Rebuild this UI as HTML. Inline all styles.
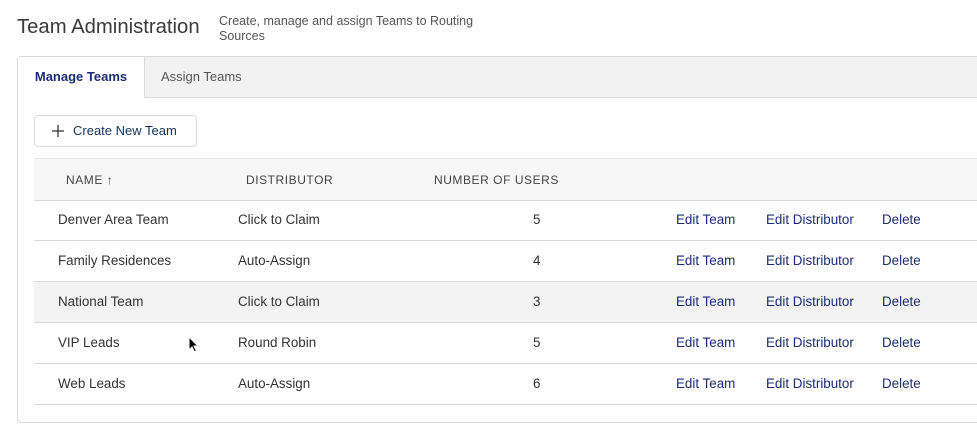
<!DOCTYPE html>
<html><head><style>
body{margin:0;width:977px;height:439px;background:#fff;font-family:"Liberation Sans",sans-serif;overflow:hidden;position:relative;color:#16325c}
.abs{position:absolute;white-space:nowrap}
.title{left:17px;top:16px;font-size:20.3px;color:#3a3a3a;font-weight:300}
.sub{left:219px;top:14px;font-size:12.5px;color:#555;line-height:15px}
.box{position:absolute;left:17px;top:56px;width:980px;height:365px;border:1px solid #dddbda;border-radius:4px;background:#fff}
.tabs{position:absolute;left:0;top:0;right:0;height:40px;background:#f3f2f2;border-bottom:1px solid #dddbda;border-radius:4px 0 0 0}
.tab{position:absolute;top:0;height:41px;line-height:40px;font-size:13px}
.btn{left:34px;top:115px;width:161px;height:30px;border:1px solid #dddbda;border-radius:4px;font-size:13px;line-height:30px;color:#16325c;background:#fff}
.thead{position:absolute;left:34px;top:158px;width:943px;height:41px;background:#f7f7f7;border-top:1px solid #e5e5e5;border-bottom:1px solid #dddbda}
.th{font-size:12px;letter-spacing:.55px;color:#444;top:173px}
.row{position:absolute;left:34px;width:943px;height:40px;border-bottom:1px solid #dddbda}
.td{font-size:13.4px;color:#333}
.lk{font-size:13.4px;color:#1b2d72}
</style></head><body>
<div class="abs title">Team Administration</div>
<div class="abs sub">Create, manage and assign Teams to Routing<br>Sources</div>
<div class="box"><div class="tabs">
<div class="tab" style="left:0;width:126px;background:#fff;border-right:1px solid #dddbda;color:#1b2d72;font-weight:bold;text-align:center">Manage Teams</div>
<div class="tab" style="left:143px;color:#555">Assign Teams</div>
</div></div>
<div class="abs btn"><svg style="position:absolute;left:17px;top:9px" width="12" height="12" viewBox="0 0 12 12"><path d="M6 0V12M0 6H12" stroke="#333" stroke-width="1.3"/></svg><span style="position:absolute;left:38px">Create New Team</span></div>
<div class="thead"></div>
<div class="abs th" style="left:66px">NAME <span style="font-size:12px">↑</span></div>
<div class="abs th" style="left:246px">DISTRIBUTOR</div>
<div class="abs th" style="left:434px">NUMBER OF USERS</div>
<div class="row" style="top:200px"></div>
<div class="row" style="top:241px"></div>
<div class="row" style="top:282px;background:#f3f3f3"></div>
<div class="row" style="top:323px"></div>
<div class="row" style="top:364px"></div>
<div class="abs td" style="left:58px;top:212px">Denver Area Team</div><div class="abs td" style="left:238px;top:212px">Click to Claim</div><div class="abs td" style="left:533px;top:212px">5</div>
<div class="abs td" style="left:58px;top:253px">Family Residences</div><div class="abs td" style="left:238px;top:253px">Auto-Assign</div><div class="abs td" style="left:533px;top:253px">4</div>
<div class="abs td" style="left:58px;top:294px">National Team</div><div class="abs td" style="left:238px;top:294px">Click to Claim</div><div class="abs td" style="left:533px;top:294px">3</div>
<div class="abs td" style="left:58px;top:335px">VIP Leads</div><div class="abs td" style="left:238px;top:335px">Round Robin</div><div class="abs td" style="left:533px;top:335px">5</div>
<div class="abs td" style="left:58px;top:376px">Web Leads</div><div class="abs td" style="left:238px;top:376px">Auto-Assign</div><div class="abs td" style="left:533px;top:376px">6</div>
<div class="abs lk" style="left:676px;top:212px">Edit Team</div><div class="abs lk" style="left:766px;top:212px">Edit Distributor</div><div class="abs lk" style="left:882px;top:212px">Delete</div>
<div class="abs lk" style="left:676px;top:253px">Edit Team</div><div class="abs lk" style="left:766px;top:253px">Edit Distributor</div><div class="abs lk" style="left:882px;top:253px">Delete</div>
<div class="abs lk" style="left:676px;top:294px">Edit Team</div><div class="abs lk" style="left:766px;top:294px">Edit Distributor</div><div class="abs lk" style="left:882px;top:294px">Delete</div>
<div class="abs lk" style="left:676px;top:335px">Edit Team</div><div class="abs lk" style="left:766px;top:335px">Edit Distributor</div><div class="abs lk" style="left:882px;top:335px">Delete</div>
<div class="abs lk" style="left:676px;top:376px">Edit Team</div><div class="abs lk" style="left:766px;top:376px">Edit Distributor</div><div class="abs lk" style="left:882px;top:376px">Delete</div>
<svg class="abs" style="left:188px;top:336px" width="12" height="18" viewBox="0 0 12 18"><path d="M1 1 L1 14 L4 11 L6.5 16 L8.5 15 L6 10 L10 10 Z" fill="#000" stroke="#fff" stroke-width="1"/></svg>
</body></html>
